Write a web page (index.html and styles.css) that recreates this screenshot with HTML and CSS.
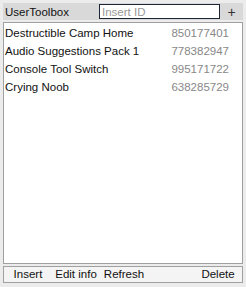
FILE: index.html
```html
<!DOCTYPE html>
<html lang="en">
	<head>
		<meta charset="UTF-8" />
		<title>UserToolbox</title>
		<link rel="stylesheet" href="styles.css">
	</head>
	<body>
		<div class="toolbox">
			<div class="top-bar">
				<span class="title">UserToolbox</span>
				<input type="text" class="id-input" placeholder="Insert ID" />
				<button class="add-btn">+</button>
			</div>
			<ul class="item-list">
				<li><span class="item-name">Destructible Camp Home</span><span class="item-id">850177401</span></li>
				<li><span class="item-name">Audio Suggestions Pack 1</span><span class="item-id">778382947</span></li>
				<li><span class="item-name">Console Tool Switch</span><span class="item-id">995171722</span></li>
				<li><span class="item-name">Crying Noob</span><span class="item-id">638285729</span></li>
			</ul>
			<div class="bottom-bar">
				<button class="bar-btn">Insert</button>
				<button class="bar-btn">Edit info</button>
				<button class="bar-btn">Refresh</button>
				<button class="bar-btn delete-btn">Delete</button>
			</div>
		</div>
	</body>
</html>
```

FILE: styles.css
```css
body {
	margin: 0;
	background-color: #ececec;
	font-family: "Liberation Sans", Arial, sans-serif;
	font-size: 11.5px;
	color: #111;
}
.toolbox {
	width: 246px;
	height: 287px;
	padding: 3px 3px 4px;
	box-sizing: border-box;
	display: flex;
	flex-direction: column;
}
.top-bar {
	display: flex;
	align-items: center;
	height: 17px;
	background-color: #d9d9d9;
}
.title {
	width: 94px;
	padding-left: 2px;
}
.id-input {
	width: 121px;
	height: 15px;
	box-sizing: border-box;
	margin: 0;
	padding: 0 2px;
	border: 1px solid #1c2733;
	font-family: inherit;
	font-size: 11.5px;
	outline: none;
}
.id-input::placeholder {
	color: #999;
}
.add-btn {
	flex: 1;
	height: 17px;
	margin: 0;
	padding: 0;
	border: none;
	background: none;
	font-family: inherit;
	font-size: 14px;
	color: #333;
}
.item-list {
	flex: 1;
	list-style: none;
	margin: 2px 0 0;
	padding: 1px 0;
	background-color: #fff;
	border: 1px solid #a0a0a0;
}
.item-list li {
	display: flex;
	justify-content: space-between;
	height: 18px;
	line-height: 18px;
	padding: 0 13px 0 1px;
}
.item-id {
	color: #888;
}
.bottom-bar {
	display: flex;
	height: 15px;
	margin-top: 2px;
	background-color: #f4f4f4;
	border: 1px solid #a0a0a0;
}
.bar-btn {
	width: 48px;
	margin: 0;
	padding: 0;
	border: none;
	background: none;
	font-family: inherit;
	font-size: 11.5px;
	line-height: 15px;
	color: #111;
}
.delete-btn {
	margin-left: auto;
}
```
